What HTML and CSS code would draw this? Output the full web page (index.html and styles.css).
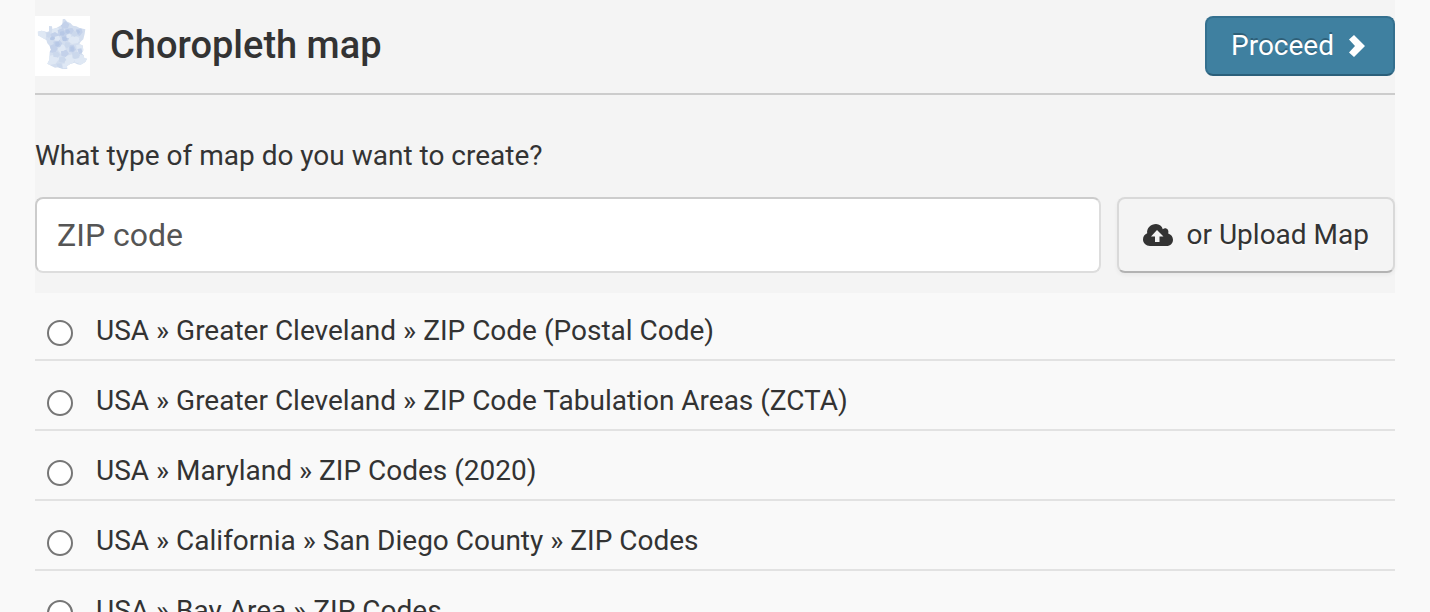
FILE: index.html
```html
<!doctype html>
<html lang="en">
<head>
<meta charset="utf-8">
<meta name="viewport" content="width=device-width, initial-scale=1">
<title>Choropleth map</title>
<link rel="stylesheet" href="styles.css">
</head>
<body>

	<main class="chooser">

		<div class="panel">

			<header class="header">
				<svg class="thumb" viewBox="0 0 165 180" aria-hidden="true">
					<defs>
						<clipPath id="france">
							<path d="M83 10L89 8L97 17L106 21L114 29L124 31L134 36L151 40L149 53L145 70L137 77L133 85L143 88L145 103L140 112L146 118L148 127L156 128L151 138L137 146L127 145L118 140L106 144L96 150L97 159L83 160L70 154L60 155L48 149L37 143L43 131L44 108L48 101L44 90L37 82L34 72L22 65L9 58L8 47L20 44L36 48L42 46L42 30L51 31L52 39L64 36L76 29L82 25Z"/>
						</clipPath>
						<filter id="soften" x="0" y="0" width="1" height="1" color-interpolation-filters="sRGB"><feGaussianBlur stdDeviation="1.5"/></filter>
					</defs>
					<g clip-path="url(#france)">
						<rect width="165" height="180" fill="#d3deef"/>
						<g filter="url(#soften)">
							<path fill="#dfe8f4" d="M0 30L25 30L34 58L30 80L0 72ZM52 39L70 35L75 45L64 54L50 50ZM102 65L119 59L133 65L129 81L111 84L100 76ZM75 84L89 88L93 105L78 114L68 101ZM123 88L137 84L150 98L145 111L127 108ZM40 120L65 115L73 128L62 143L30 150ZM90 121L112 115L121 130L110 147L90 153ZM134 116L165 120L165 150L130 148Z"/>
							<path fill="#c3d1ea" d="M77 27L91 15L103 25L99 36L82 38ZM45 55L60 48L72 56L69 67L50 68ZM68 42L83 37L93 48L85 60L71 59ZM78 56L92 51L104 63L97 76L82 73ZM90 38L112 36L119 47L110 54L94 51ZM55 77L73 72L82 82L75 94L58 93ZM43 90L57 84L68 98L60 112L45 109ZM102 88L116 87L123 101L115 110L102 107ZM123 40L139 37L143 49L134 60L122 55ZM127 99L139 97L143 110L132 115ZM78 106L94 101L102 113L92 123L79 119Z"/>
							<path fill="#b7c8e6" d="M75 47L85 45L90 52L85 59L75 57ZM91 42L100 40L106 47L99 54L91 52ZM81 64L91 61L97 68L93 76L84 75ZM61 79L72 77L75 86L69 92L61 90ZM106 92L115 91L118 101L114 107L106 105ZM124 43L132 42L136 48L130 54L123 51ZM45 65L54 61L60 67L55 73L46 72Z"/>
							<path fill="#cbd8ec" d="M115 44L126 47L128 58L118 63L109 57ZM35 51L44 48L48 58L42 66L34 62ZM92 78L104 80L105 91L96 97L88 90ZM54 109L68 107L75 116L68 125L55 122ZM111 111L127 107L135 118L127 131L113 127ZM72 125L86 121L94 131L86 140L73 138ZM64 143L79 142L83 154L70 159Z"/>
							<path fill="#dfe8f5" d="M94 57L105 53L109 61L103 67L95 65ZM60 62L71 59L76 68L70 75L60 73ZM116 69L131 68L134 76L123 80L114 77ZM78 91L87 90L91 99L85 105L77 101ZM53 127L64 124L70 132L62 137L53 135ZM82 143L94 142L98 155L84 157ZM119 129L133 126L139 135L129 142L119 139Z"/>
						</g>
					</g>
				</svg>
				<h1 class="title">Choropleth map</h1>
				<button class="proceed" type="button">
					Proceed
					<svg class="chevron" viewBox="0 0 16 22" aria-hidden="true"><path d="M0 4.500L5 0L16 11L5 22L0 17.500L6 11Z"/></svg>
				</button>
			</header>

			<label class="question" for="inpSearch">What type of map do you want to create?</label>

			<div class="search">
				<input class="search-box" id="inpSearch" type="text" value="ZIP code">
				<button class="upload" type="button">
					<svg class="cloud" viewBox="0 0 30 22" aria-hidden="true"><path fill-rule="evenodd" d="M7 22C3 22 0 19 0 15.500C0 12.500 1.800 10.300 4.200 9.300C3.300 4.200 8 0 13 0C16.500 0 18.900 2.200 19.800 5.200C22.800 2.800 26.400 5.600 25.200 9.400C28 10.300 30 12.700 30 15.700C30 19.300 27.300 22 23.500 22ZM14 6L8 12.500H12V18H16.500V12.500H20.500Z"/></svg>
					or Upload Map
				</button>
			</div>

		</div>

		<div class="results">
			<label class="result"><input class="radio" type="radio" name="map">USA » Greater Cleveland » ZIP Code (Postal Code)</label>
			<label class="result"><input class="radio" type="radio" name="map">USA » Greater Cleveland » ZIP Code Tabulation Areas (ZCTA)</label>
			<label class="result"><input class="radio" type="radio" name="map">USA » Maryland » ZIP Codes (2020)</label>
			<label class="result"><input class="radio" type="radio" name="map">USA » California » San Diego County » ZIP Codes</label>
			<label class="result"><input class="radio" type="radio" name="map">USA » Bay Area » ZIP Codes</label>
		</div>

	</main>

</body>
</html>
```
FILE: styles.css
```css
* { box-sizing: border-box; }

body { background-color: #f9f9f9; color: #333; font: 28px/40px Roboto, sans-serif; height: 100vh; margin: 0; overflow: hidden; }

button, input { color: inherit; font: inherit; margin: 0; }
button { cursor: pointer; }

.chooser { padding: 0 35px; }

.panel { background-color: #f4f4f4; padding: 16px 0 20px; }

.header { align-items: center; border-bottom: 2px solid #ccc; display: flex; gap: 20px; padding-bottom: 17px; }
.thumb { background-color: #fff; height: 60px; width: 55px; }
.title { flex: 1; font-size: 38px; font-weight: 500; line-height: 58px; margin: 0 0 2px; }

.proceed { align-items: center; background-color: #3f80a0; border: 2px solid #34708f; border-bottom-color: #2b5f7a; border-radius: 8px; color: #fff; display: flex; gap: 15px; height: 60px; padding: 0 28px 0 24px; text-shadow: 0 -2px 0 rgba(0, 0, 0, 0.25); }
.chevron { fill: #fff; height: 22px; width: 16px; }

.question { display: block; padding: 41px 0 21px; }

.search { display: flex; gap: 16px; }
.search-box { background-color: #fff; border: 2px solid #ddd; border-left-color: #ccc; border-radius: 8px; border-top-color: #ccc; color: #555; flex: 1; font-size: 32px; height: 76px; min-width: 0; padding: 0 20px; }
.upload { align-items: center; background-color: #f4f4f4; border: 2px solid #d9d9d9; border-bottom-color: #b3b3b3; border-radius: 8px; box-shadow: 0 2px 4px rgba(0, 0, 0, 0.05); display: flex; gap: 14px; height: 76px; padding: 0 24px; text-shadow: 0 2px 2px rgba(255, 255, 255, 0.75); }
.cloud { fill: #333; height: 22px; width: 30px; }

.result { align-items: center; border-bottom: 2px solid #e2e2e2; display: flex; height: 70px; padding: 12px 0 0 12px; }
.results .result:first-child { height: 68px; padding-top: 10px; }
.radio { appearance: none; background-color: #fff; border: 2px solid #767676; border-radius: 50%; height: 26px; margin: 4px 23px 0 0; width: 26px; }
.radio:checked { border-color: #0075ff; box-shadow: inset 0 0 0 4px #fff; background-color: #0075ff; }
```
